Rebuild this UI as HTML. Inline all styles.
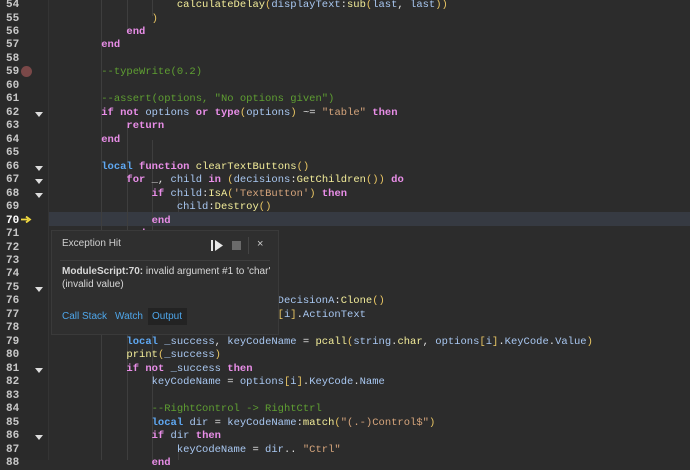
<!DOCTYPE html>
<html><head><style>
body{margin:0;width:690px;height:460px;overflow:hidden;background:#2c2c2c;font-family:"Liberation Mono",monospace;}
#g{position:absolute;left:0;top:0;width:48px;height:460px;background:#2a2a2a;}
#sep{position:absolute;left:48px;top:0;width:1px;height:460px;background:#343434;}
.ln{position:absolute;left:6px;font:bold 11px "Liberation Mono",monospace;color:#c8c8c8;height:13.47px;line-height:13.47px;}
.f{position:absolute;left:35px;width:0;height:0;border-left:4px solid transparent;border-right:4px solid transparent;border-top:5px solid #ddd;}
.c{position:absolute;left:76px;white-space:pre;font-size:10.5px;line-height:13.47px;height:13.47px;color:#e0e0e0;}
.k{color:#e98ee8;font-weight:bold}.l{color:#5fa8f2;font-weight:bold}.i{color:#a9c8f2}.fn{color:#f3ed9a}.s{color:#d6a57c}.m{color:#5f9f32}.p{color:#e8c563}
.guide{position:absolute;width:1px;background:#3e3e3e;}
#cur{position:absolute;left:49px;top:212px;width:641px;height:14px;background:#363a42;}
#dlg{position:absolute;left:51px;top:230px;width:226px;height:103px;background:#2f2f2f;border:1px solid #3a3a3a;font-family:"Liberation Sans",sans-serif;}
</style></head><body>
<div id="g"></div><div id="sep"></div><div id="cur"></div>
<div class="guide" style="left:101px;top:0;height:460px"></div>
<div class="guide" style="left:127px;top:0;height:30px"></div>
<div class="guide" style="left:152px;top:0;height:16px"></div>
<div class="guide" style="left:127px;top:126px;height:334px"></div>
<div class="guide" style="left:152px;top:140px;height:320px"></div>
<div class="guide" style="left:178px;top:194px;height:18px"></div>
<div class="guide" style="left:152px;top:382px;height:78px"></div>
<div class="guide" style="left:178px;top:445px;height:15px"></div>
<div id="lines"></div>
<div style="position:absolute;left:21px;top:66px;width:11px;height:11px;border-radius:50%;background:#7a4848"></div>
<svg style="position:absolute;left:21px;top:216px" width="11" height="7"><path d="M0 3.5H7M5 0.5L9 3.5L5 6.5" stroke="#f0d840" stroke-width="1.8" fill="none"/></svg>
<script>
var L={54:'                <span class="fn">calculateDelay</span><span class="p">(</span><span class="i">displayText</span>:<span class="fn">sub</span><span class="p">(</span><span class="i">last</span>, <span class="i">last</span><span class="p">))</span>',
55:'            <span class="p">)</span>',56:'        <span class="k">end</span>',57:'    <span class="k">end</span>',
59:'    <span class="m">--typeWrite(0.2)</span>',
61:'    <span class="m">--assert(options, "No options given")</span>',
62:'    <span class="k">if</span> <span class="k">not</span> <span class="i">options</span> <span class="k">or</span> <span class="k">type</span><span class="p">(</span><span class="i">options</span><span class="p">)</span> ~= <span class="s">"table"</span> <span class="k">then</span>',
63:'        <span class="k">return</span>',64:'    <span class="k">end</span>',
66:'    <span class="l">local</span> <span class="k">function</span> <span class="fn">clearTextButtons</span><span class="p">()</span>',
67:'        <span class="k">for</span> _, <span class="i">child</span> <span class="k">in</span> <span class="p">(</span><span class="i">decisions</span>:<span class="fn">GetChildren</span><span class="p">())</span> <span class="k">do</span>',
68:'            <span class="k">if</span> <span class="i">child</span>:<span class="fn">IsA</span><span class="p">(</span><span class="s">\'TextButton\'</span><span class="p">)</span> <span class="k">then</span>',
69:'                <span class="i">child</span>:<span class="fn">Destroy</span><span class="p">()</span>',
70:'            <span class="k">end</span>',71:'        <span class="k">end</span>',
76:'            <span class="l">local</span> <span class="i">buttonClone</span> = <span class="i">DecisionA</span>:<span class="fn">Clone</span><span class="p">()</span>',
77:'            <span class="i">buttonA.Text</span> = <span class="i">optns</span><span class="p">[</span><span class="i">i</span><span class="p">]</span>.<span class="i">ActionText</span>',
79:'        <span class="l">local</span> <span class="i">_success</span>, <span class="i">keyCodeName</span> = <span class="fn">pcall</span><span class="p">(</span><span class="i">string</span>.<span class="fn">char</span>, <span class="i">options</span><span class="p">[</span><span class="i">i</span><span class="p">]</span>.<span class="i">KeyCode</span>.<span class="i">Value</span><span class="p">)</span>',
80:'        <span class="fn">print</span><span class="p">(</span><span class="i">_success</span><span class="p">)</span>',
81:'        <span class="k">if</span> <span class="k">not</span> <span class="i">_success</span> <span class="k">then</span>',
82:'            <span class="i">keyCodeName</span> = <span class="i">options</span><span class="p">[</span><span class="i">i</span><span class="p">]</span>.<span class="i">KeyCode</span>.<span class="i">Name</span>',
84:'            <span class="m">--RightControl -&gt; RightCtrl</span>',
85:'            <span class="l">local</span> <span class="i">dir</span> = <span class="i">keyCodeName</span>:<span class="fn">match</span><span class="p">(</span><span class="s">"(.-)Control$"</span><span class="p">)</span>',
86:'            <span class="k">if</span> <span class="i">dir</span> <span class="k">then</span>',
87:'                <span class="i">keyCodeName</span> = <span class="i">dir</span>.. <span class="s">"Ctrl"</span>',
88:'            <span class="k">end</span>'};
var F=[62,66,67,68,75,81,86],h='';
for(var n=54;n<=88;n++){var y=(-1+(n-54)*13.47).toFixed(1);
h+='<div class="ln" style="top:'+y+'px'+(n==70?';color:#fff':'')+'">'+n+'</div>';
if(L[n])h+='<div class="c" style="top:'+y+'px">'+L[n]+'</div>';
if(F.indexOf(n)>=0)h+='<div class="f" style="top:'+(+y+5)+'px"></div>';}
document.getElementById('lines').innerHTML=h;
</script>
<div id="dlg">
<div style="position:absolute;left:10px;top:7px;font-size:10px;color:#d0d0d0">Exception Hit</div>
<svg style="position:absolute;left:159px;top:9px" width="12" height="11"><rect x="0" y="0" width="2" height="11" fill="#e8e8e8"/><path d="M4 0L12 5.5L4 11Z" fill="#e8e8e8"/></svg>
<div style="position:absolute;left:180px;top:10px;width:9px;height:9px;background:#6a6a6a"></div>
<div style="position:absolute;left:196px;top:6px;width:1px;height:17px;background:#444"></div>
<div style="position:absolute;left:205px;top:7px;font-size:11px;color:#ccc">×</div>
<div style="position:absolute;left:8px;top:29px;width:210px;height:1px;background:#3e3e3e"></div>
<div style="position:absolute;left:10px;top:34px;width:215px;font-size:10px;line-height:13px;color:#d8d8d8"><b>ModuleScript:70:</b> invalid argument #1 to 'char' (invalid value)</div>
<div style="position:absolute;left:10px;top:80px;font-size:10px;color:#4ea6ea">Call Stack</div>
<div style="position:absolute;left:63px;top:80px;font-size:10px;color:#4ea6ea">Watch</div>
<div style="position:absolute;left:96px;top:77px;width:39px;height:17px;background:#232323"></div>
<div style="position:absolute;left:100px;top:80px;font-size:10px;color:#4ea6ea">Output</div>
</div>
</body></html>
